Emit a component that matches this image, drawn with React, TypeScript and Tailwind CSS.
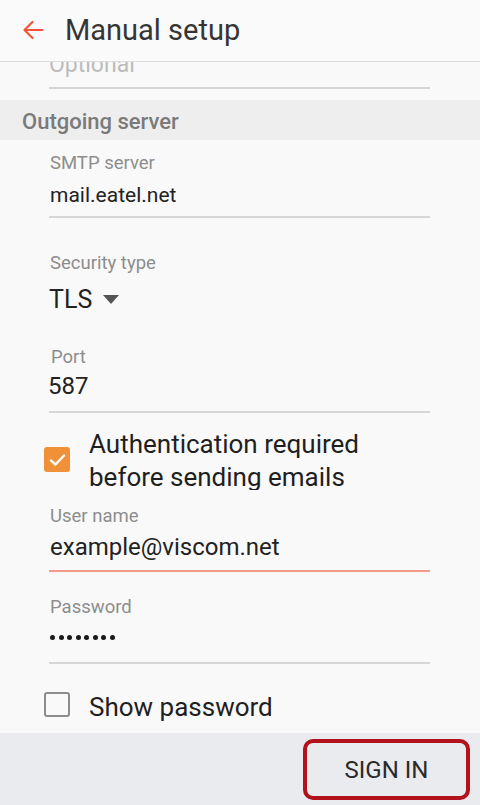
import React from 'react'

function Underline({ color = 'bg-[#d6d6d6]' }: { color?: string }) {
  return <div className={`h-[2px] w-[381px] ${color}`} />
}

function Label({ text, className = '' }: { text: string; className?: string }) {
  return <div className={`text-[18.5px] leading-[22px] text-[#8d8d8d] ${className}`}>{text}</div>
}

export default function App() {
  return (
    <div className="w-[480px] h-[805px] flex flex-col bg-[#f9f9f9] font-['Roboto',sans-serif] overflow-hidden">
      {/* Header */}
      <div className="relative z-10 h-[62px] shrink-0 flex items-center bg-[#fafafa] border-b border-[#dcdcdc]">
        <svg className="ml-[22px] w-[22px] h-[22px] -mt-[1px]" viewBox="0 0 22 22" fill="none" stroke="#ef553b" strokeWidth="2.2" strokeLinecap="round" strokeLinejoin="round">
          <path d="M20.5 11H2.5M10.5 3L2.5 11L10.5 19" />
        </svg>
        <div className="ml-[21px] -mt-[2px] text-[29px] leading-[36px] text-[#353535]">Manual setup</div>
      </div>

      {/* Scrolling content */}
      <div className="flex-1 overflow-hidden flex flex-col">
        {/* Partly scrolled-off field */}
        <div className="h-[38px] shrink-0 pl-[49px] flex flex-col">
          <div className="-mt-[11px] text-[23px] leading-[28px] text-[#bcbcbc]">Optional</div>
          <div className="mt-[8px]">
            <Underline />
          </div>
        </div>

        {/* Section band */}
        <div className="h-[40px] shrink-0 bg-[#eeeeee] pl-[22px] pt-[10px]">
          <div className="text-[22px] leading-[24px] font-medium text-[#7a7a7a]">Outgoing server</div>
        </div>

        <div className="pl-[49px] flex flex-col shrink-0">
          {/* SMTP server */}
          <Label text="SMTP server" className="mt-[12px] ml-[1px]" />
          <div className="mt-[7px] text-[21px] leading-[28px] text-[#222222] ml-[1px]">mail.eatel.net</div>
          <div className="mt-[7px]">
            <Underline />
          </div>

          {/* Security type */}
          <Label text="Security type" className="mt-[34px] ml-[1px]" />
          <div className="mt-[11px] flex items-center">
            <span className="text-[25px] leading-[30px] text-[#222222]">TLS</span>
            <svg className="ml-[11px] w-[16px] h-[10px]" viewBox="0 0 16 10">
              <path d="M0 0H16L8 9Z" fill="#555555" />
            </svg>
          </div>

          {/* Port */}
          <Label text="Port" className="mt-[31px] ml-[2px]" />
          <div className="mt-[3px] text-[24px] leading-[30px] text-[#222222] -ml-[1px]">587</div>
          <div className="mt-[10px]">
            <Underline />
          </div>
        </div>

        {/* Authentication checkbox */}
        <div className="h-[77px] shrink-0 overflow-hidden pt-[15px] pl-[44px] flex items-start">
          <div className="mt-[19px] w-[26px] h-[25px] rounded-[3px] bg-[#f0913a] flex items-center justify-center shrink-0">
            <svg className="w-[17px] h-[14px]" viewBox="0 0 17 14" fill="none" stroke="#ffffff" strokeWidth="2.4" strokeLinecap="round" strokeLinejoin="round">
              <path d="M2 7.5L6.5 11.5L15 2.5" />
            </svg>
          </div>
          <div className="ml-[19px] text-[26px] leading-[33px] text-[#1f1f1f]">
            Authentication required
            <br />
            before sending emails
          </div>
        </div>

        <div className="pl-[49px] flex flex-col shrink-0">
          {/* User name */}
          <Label text="User name" className="mt-[15px] ml-[1px]" />
          <div className="mt-[5px] text-[24px] leading-[30px] text-[#222222] ml-[1px]">example@viscom.net</div>
          <div className="mt-[8px]">
            <Underline color="bg-[#f59a88]" />
          </div>

          {/* Password */}
          <Label text="Password" className="mt-[24px] ml-[1px]" />
          <div className="mt-[17px] ml-[1px] flex gap-[3.5px]">
            {Array.from({ length: 8 }).map((_, i) => (
              <div key={i} className="w-[5px] h-[5px] rounded-full bg-[#1a1a1a]" />
            ))}
          </div>
          <div className="mt-[22px]">
            <Underline />
          </div>
        </div>

        {/* Show password */}
        <div className="mt-[28px] pl-[44px] flex items-start shrink-0">
          <div className="w-[26px] h-[25px] rounded-[3px] border-2 border-[#8c8c8c] shrink-0" />
          <div className="ml-[19px] text-[26px] leading-[30px] text-[#1f1f1f]">Show password</div>
        </div>
      </div>

      {/* Bottom bar */}
      <div className="h-[72px] shrink-0 bg-[#e9ebee] flex justify-end items-start pt-[6px] pr-[10px]">
        <button className="w-[167px] h-[61px] rounded-[10px] border-4 border-[#b3121c] flex items-center justify-center text-[24px] text-[#2a2a2a]">
          SIGN IN
        </button>
      </div>
    </div>
  )
}
